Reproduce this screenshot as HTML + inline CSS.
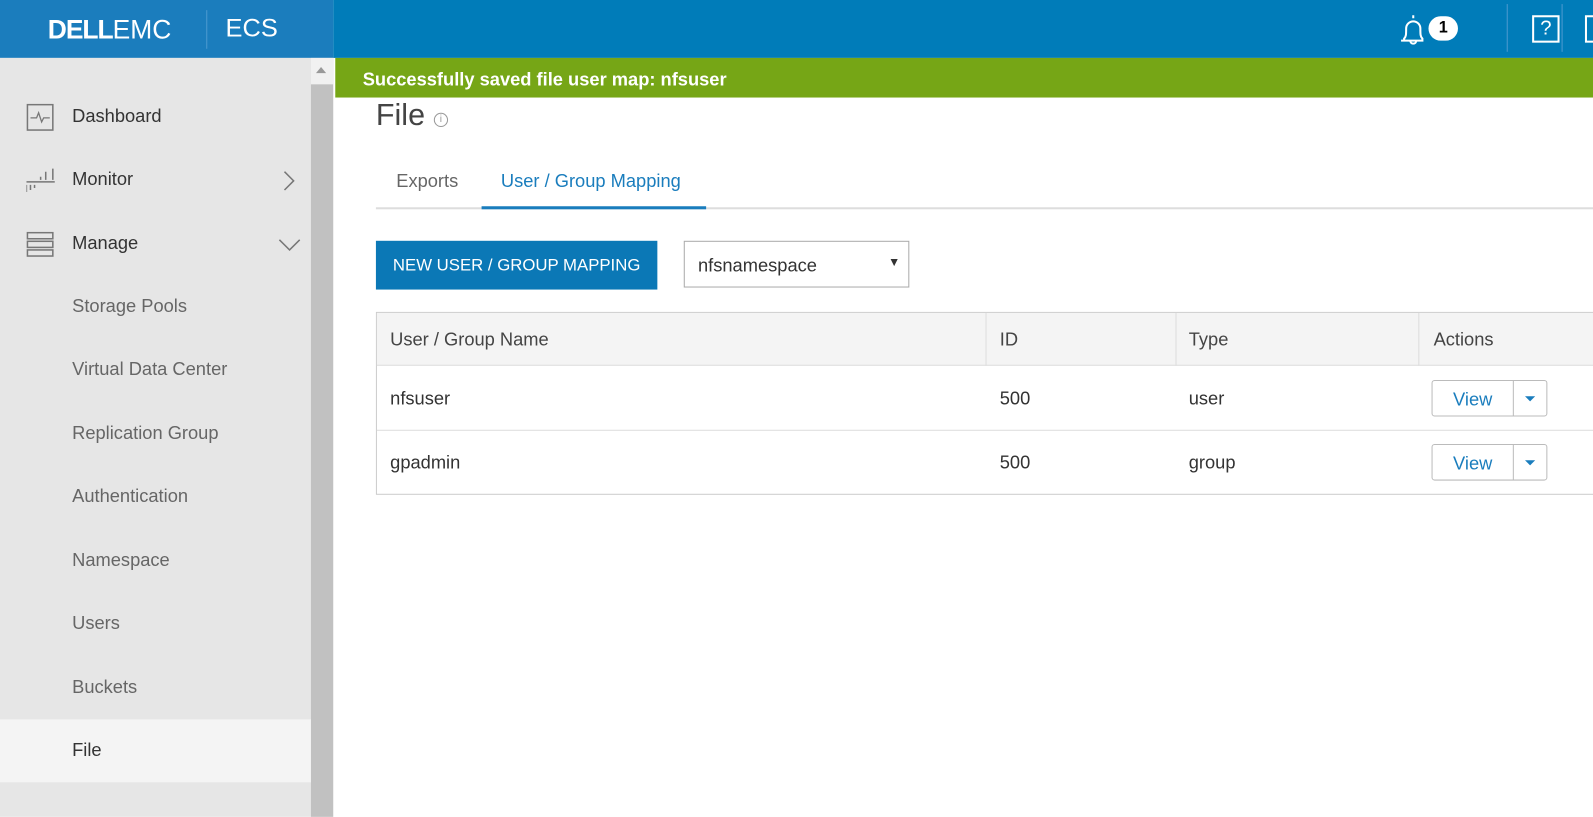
<!DOCTYPE html>
<html><head><style>
*{box-sizing:border-box;margin:0;padding:0}
body{width:1593px;height:804px;overflow:hidden;font-family:"Liberation Sans",sans-serif;background:#fff;position:relative;color:#333}
#w{position:absolute;left:0;top:0;width:1568px;height:792px;transform:scale(1.016);transform-origin:0 0}
.hl{position:absolute;left:0;top:0;width:328px;height:57px;background:#1b7dbd}
.hr{position:absolute;left:328px;top:0;right:-30px;height:57px;background:#007cb9}
.side{position:absolute;left:0;top:57px;width:306px;height:747px;background:#e6e6e6}
.sb{position:absolute;left:306px;top:57px;width:22px;height:747px;background:#c1c1c1}
.sbt{position:absolute;left:306px;top:57px;width:22px;height:26px;background:#f1f1f1}
.nav{position:absolute;left:71px;font-size:18px;color:#333}
.sub{position:absolute;left:71px;font-size:18px;color:#666}
.green{position:absolute;left:330px;top:57px;right:-30px;height:39px;background:#76a616;color:#fff;font-size:18px;font-weight:bold;padding:11px 0 0 27px}
.t{position:absolute;font-size:18px}
</style></head><body><div id="w">
<div class="hl"></div><div class="hr"></div>
<div style="position:absolute;left:47px;top:14px;color:#fff;font-size:26px;letter-spacing:0px"><b style="letter-spacing:-1px">DELL</b><span style="font-weight:300">EMC</span></div>
<div style="position:absolute;left:203px;top:10px;width:1px;height:38px;background:#4d9ad0"></div>
<div style="position:absolute;left:222px;top:14px;color:#fff;font-size:25px">ECS</div>
<svg style="position:absolute;left:1374px;top:12px" width="34" height="32" viewBox="0 0 34 32"><path d="M5 28h22M8 28v-2c2-2 2-4 2-10a7 7 0 0 1 14 0c0 6 0 8 2 10v2M14 28a3 3 0 0 0 6 0M17 3v3" fill="none" stroke="#fff" stroke-width="2"/></svg>
<div style="position:absolute;left:1406px;top:16px;width:29px;height:24px;border-radius:12px;background:#fff;color:#000;font-size:16px;font-weight:bold;text-align:center;line-height:24px">1</div>
<div style="position:absolute;left:1483px;top:4px;width:1px;height:47px;background:#4d9ad0"></div>
<div style="position:absolute;left:1537px;top:4px;width:1px;height:47px;background:#4d9ad0"></div>
<div style="position:absolute;left:1508px;top:15px;width:27px;height:27px;border:2px solid #fff;color:#fff;font-size:20px;text-align:center;line-height:23px">?</div>
<div style="position:absolute;left:1560px;top:15px;width:20px;height:27px;border:2px solid #fff"></div>
<div class="side"></div><div class="sb"></div><div class="sbt"></div>
<div style="position:absolute;left:311px;top:66px;border:5px solid transparent;border-bottom:6px solid #999;border-top:0"></div>
<div style="position:absolute;left:0;top:708px;width:306px;height:62px;background:#f4f4f4"></div>
<svg style="position:absolute;left:26px;top:102px" width="28" height="28"><rect x="1" y="1" width="25" height="25" fill="none" stroke="#777" stroke-width="1.5"/><path d="M4 14h6l2-5 3 9 2-4h6" fill="none" stroke="#777" stroke-width="1.3"/></svg>
<svg style="position:absolute;left:26px;top:165px" width="28" height="28"><path d="M0 14h28M0 17v7M4 17v5M8 17v3M14 9v3M19 4v8M26 1v11" stroke="#777" stroke-width="1.5"/></svg>
<svg style="position:absolute;left:26px;top:228px" width="28" height="26"><rect x="1" y="1" width="25" height="6" fill="none" stroke="#777" stroke-width="1.5"/><rect x="1" y="9.5" width="25" height="6" fill="none" stroke="#777" stroke-width="1.5"/><rect x="1" y="18" width="25" height="6" fill="none" stroke="#777" stroke-width="1.5"/></svg>
<div class="nav" style="top:104px">Dashboard</div>
<div class="nav" style="top:166px">Monitor</div>
<div class="nav" style="top:229px">Manage</div>
<svg style="position:absolute;left:278px;top:168px" width="14" height="20"><path d="M2 1l9 9-9 9" fill="none" stroke="#777" stroke-width="1.5"/></svg>
<svg style="position:absolute;left:274px;top:234px" width="22" height="14"><path d="M1 2l10 10 10-10" fill="none" stroke="#777" stroke-width="1.5"/></svg>
<div class="sub" style="top:291px">Storage Pools</div>
<div class="sub" style="top:353px">Virtual Data Center</div>
<div class="sub" style="top:416px">Replication Group</div>
<div class="sub" style="top:478px">Authentication</div>
<div class="sub" style="top:541px">Namespace</div>
<div class="sub" style="top:603px">Users</div>
<div class="sub" style="top:666px">Buckets</div>
<div class="nav" style="top:728px">File</div>
<div class="green">Successfully saved file user map: nfsuser</div>
<div class="t" style="left:370px;top:97px;font-size:30px;color:#444">File</div>
<div style="position:absolute;left:427px;top:111px;width:14px;height:14px;border:1px solid #999;border-radius:50%;font-size:10px;color:#999;text-align:center;line-height:12px">i</div>
<div class="t" style="left:390px;top:168px;color:#666">Exports</div>
<div class="t" style="left:493px;top:168px;color:#1a7dbd">User / Group Mapping</div>
<div style="position:absolute;left:370px;top:204px;width:1223px;height:2px;background:#ddd"></div>
<div style="position:absolute;left:474px;top:203px;width:221px;height:3px;background:#1a7dbd"></div>
<div style="position:absolute;left:370px;top:237px;width:277px;height:48px;background:#0b78b6;color:#fff;font-size:16.5px;text-align:center;line-height:48px">NEW USER / GROUP MAPPING</div>
<div style="position:absolute;left:673px;top:237px;width:222px;height:46px;border:1px solid #aaa;font-size:18px;padding:13px 0 0 13px">nfsnamespace<span style="position:absolute;right:8px;top:13px;font-size:12px">▼</span></div>
<div style="position:absolute;left:370px;top:307px;width:1240px;height:180px;border:1px solid #ccc"></div>
<div style="position:absolute;left:371px;top:308px;width:1230px;height:52px;background:#f4f4f4;border-bottom:1px solid #ddd"></div>
<div style="position:absolute;left:970px;top:308px;width:1px;height:52px;background:#ddd"></div>
<div style="position:absolute;left:1157px;top:308px;width:1px;height:52px;background:#ddd"></div>
<div style="position:absolute;left:1396px;top:308px;width:1px;height:52px;background:#ddd"></div>
<div style="position:absolute;left:371px;top:423px;width:1230px;height:1px;background:#ddd"></div>
<div class="t" style="left:384px;top:324px;color:#444">User / Group Name</div>
<div class="t" style="left:984px;top:324px;color:#444">ID</div>
<div class="t" style="left:1170px;top:324px;color:#444">Type</div>
<div class="t" style="left:1411px;top:324px;color:#444">Actions</div>
<div class="t" style="left:384px;top:382px">nfsuser</div><div class="t" style="left:984px;top:382px">500</div><div class="t" style="left:1170px;top:382px">user</div>
<div class="t" style="left:384px;top:445px">gpadmin</div><div class="t" style="left:984px;top:445px">500</div><div class="t" style="left:1170px;top:445px">group</div>
<div style="position:absolute;left:1409px;top:374px;width:114px;height:36px;border:1px solid #bbb;border-radius:3px"><span style="position:absolute;left:0;width:79px;text-align:center;top:8px;font-size:18px;color:#1a7dbd">View</span><span style="position:absolute;left:79px;top:0;width:1px;height:34px;background:#bbb"></span><span style="position:absolute;left:91px;top:15px;border:5px solid transparent;border-top:5px solid #1a7dbd"></span></div>
<div style="position:absolute;left:1409px;top:437px;width:114px;height:36px;border:1px solid #bbb;border-radius:3px"><span style="position:absolute;left:0;width:79px;text-align:center;top:8px;font-size:18px;color:#1a7dbd">View</span><span style="position:absolute;left:79px;top:0;width:1px;height:34px;background:#bbb"></span><span style="position:absolute;left:91px;top:15px;border:5px solid transparent;border-top:5px solid #1a7dbd"></span></div>
</div></body></html>
